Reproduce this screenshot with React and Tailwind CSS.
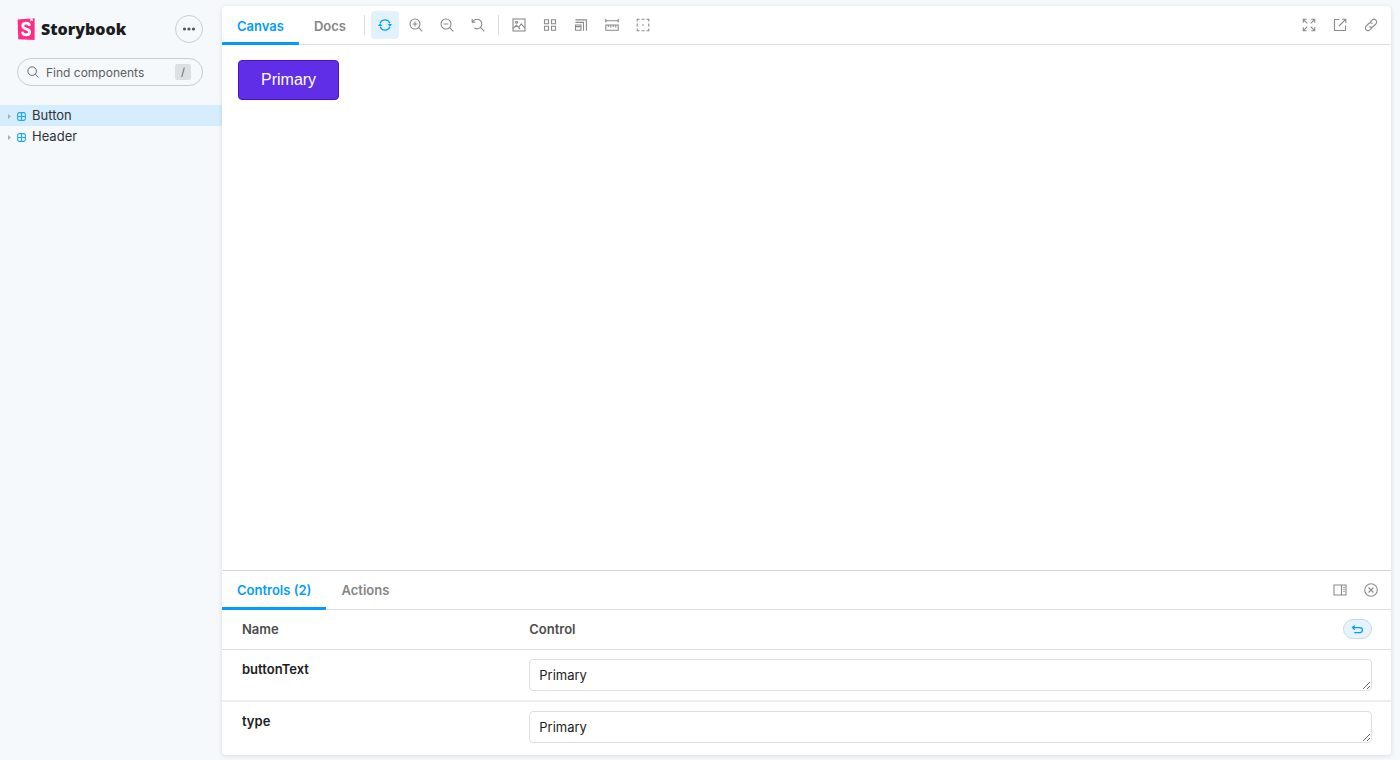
// App.jsx
import { useState } from "react";

const icons = {
  sync: (
    <>
      <path
        d="M2.2 5.2a5.1 5.1 0 0 1 9.6 0M11.8 8.8a5.1 5.1 0 0 1-9.6 0"
        strokeWidth="1.3"
      />
      <path
        d="M0 7.9 2 5.2l2.2 2.7zM14 6.1l-2 2.7-2.2-2.7z"
        fill="currentColor"
        stroke="none"
      />
    </>
  ),
  zoomIn: (
    <>
      <circle cx="6" cy="6" r="5" />
      <path d="M9.7 9.7l3.6 3.6M6 3.6v4.8M3.6 6h4.8" />
    </>
  ),
  zoomOut: (
    <>
      <circle cx="6" cy="6" r="5" />
      <path d="M9.7 9.7l3.6 3.6M3.6 6h4.8" />
    </>
  ),
  zoomReset: (
    <path d="M1.2 1v3.2h3.2M1.6 4.2A4.8 4.8 0 1 1 3.2 9.9M9.7 9.7l3.6 3.6" />
  ),
  photo: (
    <>
      <rect x="1" y="1" width="12" height="12" />
      <circle cx="4.6" cy="4.3" r="1" />
      <path d="M1 10.5l3.4-3.2 2.2 2.2 2.6-3.6L13 10.2M6.6 9.5L8 11" />
    </>
  ),
  grid: (
    <path d="M1.5 1.8h4v4h-4zM8.5 1.8h4v4h-4zM1.5 8.3h4v4h-4zM8.5 8.3h4v4h-4z" />
  ),
  viewport: (
    <path d="M1.5 7h5.5v5.2H1.5zM1.5 4.4h8v8.3M1.5 1.9h10.9v10.8M1.5 8.6H7" />
  ),
  measure: (
    <path d="M.8 2.7h12.4M.8 1v3.4M13.2 1v3.4M.8 7h12.4v5.2H.8zM3.3 7v2M5.8 7v2.6M8.3 7v2M10.8 7v2.6" />
  ),
  outline: (
    <path d="M1.2 3.5V1.2h2.3M5.5 1.2h3M10.5 1.2h2.3v2.3M12.8 5.5v3M12.8 10.5v2.3h-2.3M8.5 12.8h-3M3.5 12.8H1.2v-2.3M1.2 8.5v-3M6.3 7h1.4M7 6.3v1.4" />
  ),
  expand: (
    <path d="M1.3 4.7V1.3h3.4M1.3 1.3l4 4M9.3 1.3h3.4v3.4M12.7 1.3l-4 4M12.7 9.3v3.4H9.3M12.7 12.7l-4-4M4.7 12.7H1.3V9.3M1.3 12.7l4-4" />
  ),
  share: <path d="M6.5 1.5h-5v11h11v-5M9 1.2h3.8V5M12.7 1.3L6 8" />,
  link: (
    <path d="M6 4.3l2.2-2.2a2.6 2.6 0 0 1 3.7 3.7L9.2 8.5a2.6 2.6 0 0 1-3.7 0M8 9.7l-2.2 2.2a2.6 2.6 0 0 1-3.7-3.7l2.7-2.7a2.6 2.6 0 0 1 3.7 0" />
  ),
  sidebar: (
    <path d="M1 2h12v10H1zM8.5 2v10M10.2 4.2h1.6M10.2 6.2h1.6M10.2 8.2h1.6" />
  ),
  close: (
    <>
      <circle cx="7" cy="7" r="6.3" />
      <path d="M4.5 4.5l5 5M9.5 4.5l-5 5" />
    </>
  ),
  search: (
    <>
      <circle cx="6" cy="6" r="5" />
      <path d="M9.7 9.7l3.6 3.6" />
    </>
  ),
  undo: (
    <path
      d="M3.8 1.8L1.2 4.2l2.6 2.4M1.4 4.2h8.4a2.9 2.9 0 0 1 0 5.8H3.2"
      strokeWidth="1.5"
    />
  ),
  component: (
    <>
      <rect x="1" y="1" width="12" height="12" rx="2.5" strokeWidth="1.7" />
      <path d="M7 1v12M1 7h12" strokeWidth="1.7" />
    </>
  ),
};

const Icon = ({ name, className = "size-[14px]" }) => (
  <svg
    viewBox="0 0 14 14"
    fill="none"
    stroke="currentColor"
    strokeWidth="1.1"
    className={className}
    aria-hidden="true"
  >
    {icons[name]}
  </svg>
);

const ToolButton = ({ icon, label, active }) => (
  <button
    aria-label={label}
    className={`flex size-7 items-center justify-center rounded ${
      active ? "bg-[#e2f2fd] text-[#029cfd]" : "text-[#8a8a8a]"
    }`}
  >
    <Icon name={icon} />
  </button>
);

const Tab = ({ children, active, onClick }) => (
  <button
    onClick={onClick}
    className={`h-full border-b-3 px-[15px] pt-[5px] text-[13px] font-semibold ${
      active
        ? "border-b-[#029cfd] text-[#029cfd]"
        : "border-b-transparent text-[#858585]"
    }`}
  >
    {children}
  </button>
);

const Separator = () => <span className="h-5 w-px bg-[#dedede]" />;

const Sidebar = () => {
  const [selected, setSelected] = useState("Button");

  return (
    <aside className="w-[222px] shrink-0 text-[#2e3438]">
      <div className="flex items-center justify-between pt-[15px] pr-[19px] pl-[17px]">
        <a href="#" className="flex items-center gap-[6px]">
          <svg viewBox="0 0 18 22" className="h-[22px] w-[18px]">
            <path d="M.6 1.4L17.6.3V22L1.3 21.2z" fill="#ff2b85" />
            <path d="M13.4.5l2.3-.2.1 3.2-1.2-.9-1.3.9z" fill="#fff" />
            <path
              d="M12.4 8c0-2-1.3-2.8-3.2-2.8S5.8 6.2 5.8 7.9c0 3.8 6.9 2.4 6.9 6.2 0 1.9-1.4 2.8-3.5 2.8s-3.7-.8-3.6-3.1"
              fill="none"
              stroke="#fff"
              strokeWidth="2.8"
            />
          </svg>
          <span className="font-['Open_Sans',sans-serif] text-base leading-7 font-extrabold text-[#1b1c1d]">
            Storybook
          </span>
        </a>
        <button
          aria-label="Shortcuts"
          className="flex size-7 items-center justify-center rounded-full border border-[#c9cdd0] text-[#555]"
        >
          <svg viewBox="0 0 14 4" className="h-1 w-[14px]" fill="currentColor">
            <circle cx="2.5" cy="2" r="1.6" />
            <circle cx="7" cy="2" r="1.6" />
            <circle cx="11.5" cy="2" r="1.6" />
          </svg>
        </button>
      </div>

      <label className="mt-[15px] mr-[19px] ml-[17px] flex h-7 items-center rounded-full border border-[#c9cdd0] pr-[11px] pl-[9px] text-[#5c5f61]">
        <Icon name="search" className="size-3 shrink-0" />
        <input
          type="text"
          aria-label="Find components"
          placeholder="Find components"
          className="ml-[7px] w-0 flex-1 bg-transparent pt-px text-xs outline-none placeholder:text-[#5c5f61]"
        />
        <kbd className="flex h-4 w-4 items-center justify-center rounded-xs bg-[#dce0e3] font-['Inter',sans-serif] text-[11px]">
          /
        </kbd>
      </label>

      <nav className="mt-[19px]">
        {["Button", "Header"].map((item) => (
          <button
            key={item}
            onClick={() => setSelected(item)}
            className={`flex h-[21px] w-full items-center pt-px pl-2 text-[13px] ${
              selected === item ? "bg-[#d5edfd]" : ""
            }`}
          >
            <svg viewBox="0 0 3 5" className="h-[5px] w-[3px]" fill="#aaaeb1">
              <path d="M0 0l3 2.5L0 5z" />
            </svg>
            <Icon
              name="component"
              className="mr-[6px] ml-[6px] size-[9px] text-[#1ea7fd]"
            />
            {item}
          </button>
        ))}
      </nav>
    </aside>
  );
};

const Toolbar = () => {
  const [tab, setTab] = useState("Canvas");

  return (
    <div className="flex h-[39px] items-center border-b border-[#dedede]">
      <div className="-mb-px flex self-stretch">
        {["Canvas", "Docs"].map((name) => (
          <Tab key={name} active={tab === name} onClick={() => setTab(name)}>
            {name}
          </Tab>
        ))}
      </div>
      <div className="ml-[3px] flex items-center gap-[6px]">
        <Separator />
        <div className="flex gap-[3px]">
          <ToolButton icon="sync" label="Remount component" active />
          <ToolButton icon="zoomIn" label="Zoom in" />
          <ToolButton icon="zoomOut" label="Zoom out" />
          <ToolButton icon="zoomReset" label="Reset zoom" />
        </div>
        <Separator />
        <div className="flex gap-[3px]">
          <ToolButton icon="photo" label="Change background" />
          <ToolButton icon="grid" label="Apply a grid" />
          <ToolButton icon="viewport" label="Change viewport" />
          <ToolButton icon="measure" label="Enable measure" />
          <ToolButton icon="outline" label="Apply outlines" />
        </div>
      </div>
      <div className="mr-[6px] ml-auto flex gap-[3px]">
        <ToolButton icon="expand" label="Go full screen" />
        <ToolButton icon="share" label="Open canvas in new tab" />
        <ToolButton icon="link" label="Copy canvas link" />
      </div>
    </div>
  );
};

const AddonPanel = ({ args, onChange, onReset }) => {
  const [tab, setTab] = useState("Controls (2)");

  return (
    <section className="border-t border-[#d5d5d5] pb-[3px]">
      <div className="flex h-[39px] items-center border-b border-[#dedede]">
        <div className="-mb-px flex self-stretch">
          {["Controls (2)", "Actions"].map((name) => (
            <Tab key={name} active={tab === name} onClick={() => setTab(name)}>
              {name}
            </Tab>
          ))}
        </div>
        <div className="mr-[6px] ml-auto flex gap-[3px]">
          <ToolButton icon="sidebar" label="Change orientation" />
          <ToolButton icon="close" label="Hide addons" />
        </div>
      </div>

      <table className="w-full table-fixed text-left text-[13px] text-[#1b1c1d]">
        <thead>
          <tr className="h-10 border-b border-[#dedede] text-[#4d4d4d]">
            <th className="w-1/4 pl-5 font-semibold">Name</th>
            <th className="pr-[19px] pl-[15px] font-semibold">
              <div className="flex items-center justify-between">
                Control
                <button
                  aria-label="Reset controls"
                  onClick={onReset}
                  className="flex h-5 w-[29px] items-center justify-center rounded-full border border-[#c5d9e8] bg-[#e6f3fc] text-[#029cfd]"
                >
                  <Icon name="undo" className="size-[13px] pt-px" />
                </button>
              </div>
            </th>
          </tr>
        </thead>
        <tbody>
          {Object.keys(args).map((name) => (
            <tr key={name} className="border-b-2 border-[#eeeeee] last:border-0">
              <th className="pt-[10px] pl-5 align-top font-semibold">
                <label htmlFor={name}>{name}</label>
              </th>
              <td className="py-[9px] pr-[19px] pl-[15px]">
                <textarea
                  id={name}
                  rows={1}
                  value={args[name]}
                  onChange={(e) => onChange(name, e.target.value)}
                  className="block h-8 w-full resize-y rounded border border-[#dedede] px-[9px] py-[5px] leading-5 outline-none"
                />
              </td>
            </tr>
          ))}
        </tbody>
      </table>
    </section>
  );
};

const initialArgs = { buttonText: "Primary", type: "Primary" };

const App = () => {
  const [args, setArgs] = useState(initialArgs);

  return (
    <div className="flex h-screen bg-[#f5f9fc] font-['Inter',sans-serif]">
      <Sidebar />
      <main className="mt-[6px] mr-[9px] mb-[5px] flex min-w-0 flex-1 flex-col overflow-hidden rounded bg-white shadow-[0_1px_5px_rgba(0,0,0,0.12)]">
        <Toolbar />
        <div className="flex-1 p-4 pt-[15px]">
          <button className="h-10 rounded border border-[#4b12d6] bg-[#602ee6] px-[22px] font-['Liberation_Sans',Arial,sans-serif] text-base text-white">
            {args.buttonText}
          </button>
        </div>
        <AddonPanel
          args={args}
          onChange={(name, value) => setArgs({ ...args, [name]: value })}
          onReset={() => setArgs(initialArgs)}
        />
      </main>
    </div>
  );
};

export default App;
